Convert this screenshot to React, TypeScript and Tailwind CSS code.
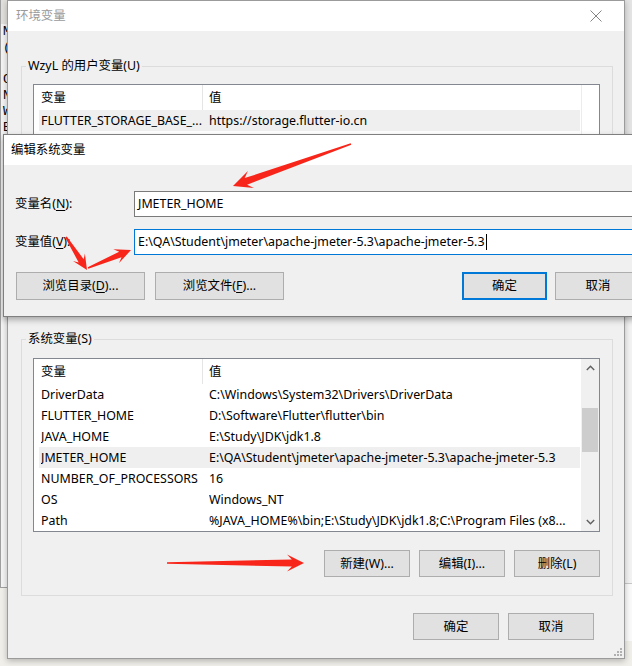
import React from "react";

type ArrowSpec = { x1: number; y1: number; x2: number; y2: number; hl: number; hw: number; tw: number; nw: number };

function arrowPoints(a: ArrowSpec): string {
  const dx = a.x2 - a.x1;
  const dy = a.y2 - a.y1;
  const L = Math.sqrt(dx * dx + dy * dy);
  const ux = dx / L;
  const uy = dy / L;
  const nx = -uy;
  const ny = ux;
  const neckX = a.x2 - ux * a.hl * 0.72;
  const neckY = a.y2 - uy * a.hl * 0.72;
  const baseX = a.x2 - ux * a.hl;
  const baseY = a.y2 - uy * a.hl;
  const pts: [number, number][] = [
    [a.x1 + nx * a.tw, a.y1 + ny * a.tw],
    [neckX + nx * a.nw, neckY + ny * a.nw],
    [baseX + nx * a.hw, baseY + ny * a.hw],
    [a.x2, a.y2],
    [baseX - nx * a.hw, baseY - ny * a.hw],
    [neckX - nx * a.nw, neckY - ny * a.nw],
    [a.x1 - nx * a.tw, a.y1 - ny * a.tw],
  ];
  return pts.map((p) => `${p[0].toFixed(1)},${p[1].toFixed(1)}`).join(" ");
}

const arrows: ArrowSpec[] = [
  { x1: 351, y1: 144, x2: 233, y2: 186, hl: 19, hw: 9, tw: 0.9, nw: 3.5 },
  { x1: 66, y1: 237, x2: 87, y2: 270, hl: 15, hw: 7, tw: 0.9, nw: 3 },
  { x1: 88, y1: 268, x2: 131, y2: 250, hl: 16, hw: 7.5, tw: 0.9, nw: 3 },
  { x1: 167, y1: 563, x2: 304, y2: 563, hl: 17, hw: 8.5, tw: 0.8, nw: 3.5 },
];

const sysRows: [string, string][] = [
  ["DriverData", "C:\\Windows\\System32\\Drivers\\DriverData"],
  ["FLUTTER_HOME", "D:\\Software\\Flutter\\flutter\\bin"],
  ["JAVA_HOME", "E:\\Study\\JDK\\jdk1.8"],
  ["JMETER_HOME", "E:\\QA\\Student\\jmeter\\apache-jmeter-5.3\\apache-jmeter-5.3"],
  ["NUMBER_OF_PROCESSORS", "16"],
  ["OS", "Windows_NT"],
  ["Path", "%JAVA_HOME%\\bin;E:\\Study\\JDK\\jdk1.8;C:\\Program Files (x8..."],
];

function ListHeader() {
  return (
    <div className="flex h-[25px] shrink-0 items-center bg-white">
      <div className="flex h-full w-[169px] items-center border-r border-[#e5e5e5] pl-[7px]">变量</div>
      <div className="pl-[6px]">值</div>
    </div>
  );
}

function Row({ name, value, selected }: { name: string; value: string; selected?: boolean }) {
  return (
    <div className={selected ? "ml-[5px] mr-[1px] flex h-[21px] items-center bg-[#efefef] pl-[2px]" : "ml-[5px] mr-[1px] flex h-[21px] items-center pl-[2px]"}>
      <div className="w-[168px] shrink-0 overflow-hidden whitespace-nowrap">{name}</div>
      <div className="overflow-hidden whitespace-nowrap">{value}</div>
    </div>
  );
}

function Chevron({ up }: { up?: boolean }) {
  return (
    <svg width="9" height="6" viewBox="0 0 9 6">
      <polyline
        points={up ? "0.8,5 4.5,1.2 8.2,5" : "0.8,1 4.5,4.8 8.2,1"}
        fill="none"
        stroke="#606060"
        strokeWidth="1.4"
      />
    </svg>
  );
}

export default function App() {
  return (
    <div className="relative h-[666px] w-[632px] overflow-hidden bg-[#f1efea] font-['Noto_Sans','Noto_Sans_CJK_SC',sans-serif] text-[12.4px] leading-[16px] text-black">
      {/* background console window on the left */}
      <div className="absolute left-0 top-0 flex h-[588px] w-[8px] flex-col border-b border-l border-[#a0a0a0] bg-[#f4f4f4]">
        <div className="h-[24px] shrink-0 bg-[#e2e0dc]" />
        <div className="pl-[2px] font-['Liberation_Mono',monospace] text-[13px] leading-[16px]">
          <div>M</div>
          <div>(</div>
          <div>&nbsp;</div>
          <div>C</div>
          <div>N</div>
          <div>W</div>
          <div>E</div>
        </div>
      </div>

      {/* background on the right */}
      <div className="absolute right-0 top-0 flex h-full w-[8px] flex-col">
        <div className="h-[316px] shrink-0 bg-[#e4e4e4]" />
        <div className="h-[267px] shrink-0 bg-[#f3f3f3]" />
        <div className="h-[58px] shrink-0 border-t border-[#c8c8c8] bg-[#fafafa]" />
        <div className="flex-1 bg-[#f1efea]" />
      </div>

      {/* 环境变量 dialog */}
      <div className="absolute left-[7px] top-0 flex h-[659px] w-[618px] flex-col border border-[#9b9b9b] bg-[#f0f0f0] shadow-[0_2px_6px_rgba(0,0,0,0.25)]">
        <div className="flex h-[30px] shrink-0 items-center justify-between bg-white pl-[8px] pr-[22px]">
          <span className="text-[#9a9a9a]">环境变量</span>
          <svg width="12" height="12" viewBox="0 0 12 12">
            <line x1="0.5" y1="0.5" x2="11.5" y2="11.5" stroke="#858585" strokeWidth="1" />
            <line x1="11.5" y1="0.5" x2="0.5" y2="11.5" stroke="#858585" strokeWidth="1" />
          </svg>
        </div>

        <div className="flex flex-1 flex-col pl-[13px] pr-[11px]">
          {/* user variables */}
          <fieldset className="mt-[27px] h-[256px] border border-[#dcdcdc] p-0">
            <legend className="ml-[4px] px-[2px] leading-[16px]">WzyL 的用户变量(U)</legend>
            <div className="pl-[11px] pr-[12px] pt-[10px]">
              <div className="flex h-[170px] border border-[#828790] bg-white">
                <div className="flex flex-1 flex-col">
                  <ListHeader />
                  <Row name="FLUTTER_STORAGE_BASE_..." value="https://storage.flutter-io.cn" selected />
                </div>
                <div className="w-[18px] border-l border-[#ececec] bg-white" />
              </div>
            </div>
          </fieldset>

          {/* system variables */}
          <fieldset className="mt-[17px] border border-[#dcdcdc] p-0">
            <legend className="ml-[4px] px-[2px] leading-[16px]">系统变量(S)</legend>
            <div className="pb-[18px] pl-[11px] pr-[12px] pt-[11px]">
              <div className="flex h-[174px] border border-[#828790] bg-white">
                <div className="flex flex-1 flex-col">
                  <ListHeader />
                  {sysRows.map(([n, v]) => (
                    <Row key={n} name={n} value={v} selected={n === "JMETER_HOME"} />
                  ))}
                </div>
                <div className="flex w-[18px] flex-col bg-[#f0f0f0]">
                  <div className="flex h-[18px] shrink-0 items-center justify-center">
                    <Chevron up />
                  </div>
                  <div className="flex flex-1 flex-col px-[1px] pt-[31px]">
                    <div className="h-[44px] bg-[#cdcdcd]" />
                  </div>
                  <div className="flex h-[18px] shrink-0 items-center justify-center">
                    <Chevron />
                  </div>
                </div>
              </div>
              <div className="mt-[18px] flex justify-end gap-[9px]">
                <button className="flex h-[27px] w-[86px] items-center justify-center border border-[#adadad] bg-[#e1e1e1]">新建(W)...</button>
                <button className="flex h-[27px] w-[86px] items-center justify-center border border-[#adadad] bg-[#e1e1e1]">编辑(I)...</button>
                <button className="flex h-[27px] w-[86px] items-center justify-center border border-[#adadad] bg-[#e1e1e1]">删除(L)</button>
              </div>
            </div>
          </fieldset>

          <div className="mt-[17px] flex justify-end gap-[9px] pr-[19px]">
            <button className="flex h-[27px] w-[86px] items-center justify-center border border-[#adadad] bg-[#e1e1e1]">确定</button>
            <button className="flex h-[27px] w-[86px] items-center justify-center border border-[#adadad] bg-[#e1e1e1]">取消</button>
          </div>
        </div>

        <svg className="absolute bottom-[2px] right-[2px]" width="8" height="8" viewBox="0 0 8 8">
          <rect x="6" y="0" width="2" height="2" fill="#b0b0b0" />
          <rect x="3" y="3" width="2" height="2" fill="#b0b0b0" />
          <rect x="6" y="3" width="2" height="2" fill="#b0b0b0" />
          <rect x="0" y="6" width="2" height="2" fill="#b0b0b0" />
          <rect x="3" y="6" width="2" height="2" fill="#b0b0b0" />
          <rect x="6" y="6" width="2" height="2" fill="#b0b0b0" />
        </svg>
      </div>

      {/* 编辑系统变量 dialog */}
      <div className="absolute left-[3px] top-[134px] flex h-[183px] w-[652px] flex-col border border-[#7f7f7f] bg-[#f0f0f0] shadow-[0_3px_6px_rgba(0,0,0,0.3)]">
        <div className="flex h-[30px] shrink-0 items-center bg-white pl-[7px]">编辑系统变量</div>
        <div className="flex flex-col pl-[11px] pr-[13px] pt-[26px]">
          <div className="flex h-[26px] items-center">
            <div className="w-[119px] shrink-0">
              变量名(<span className="underline underline-offset-2">N</span>):
            </div>
            <div className="flex h-full flex-1 items-center border border-[#7a7a7a] bg-white pl-[3px]">JMETER_HOME</div>
          </div>
          <div className="mt-[12px] flex h-[26px] items-center">
            <div className="w-[119px] shrink-0">
              变量值(<span className="underline underline-offset-2">V</span>):
            </div>
            <div className="flex h-full flex-1 items-center border border-[#0078d7] bg-white pl-[3px]">
              <span>E:\QA\Student\jmeter\apache-jmeter-5.3\apache-jmeter-5.3</span>
              <span className="ml-[1px] h-[16px] w-[1px] bg-black" />
            </div>
          </div>
          <div className="mt-[17px] flex items-center">
            <button className="ml-[1px] flex h-[28px] w-[129px] items-center justify-center border border-[#adadad] bg-[#e1e1e1]">
              浏览目录(<span className="underline underline-offset-2">D</span>)...
            </button>
            <button className="ml-[10px] flex h-[28px] w-[129px] items-center justify-center border border-[#adadad] bg-[#e1e1e1]">
              浏览文件(<span className="underline underline-offset-2">F</span>)...
            </button>
            <div className="flex-1" />
            <button className="flex h-[28px] w-[85px] items-center justify-center border-2 border-[#0078d7] bg-[#e1e1e1]">确定</button>
            <button className="ml-[8px] flex h-[28px] w-[86px] items-center justify-center border border-[#adadad] bg-[#e1e1e1]">取消</button>
          </div>
        </div>
      </div>

      {/* red annotation arrows */}
      <svg className="pointer-events-none absolute left-0 top-0" width="632" height="666" viewBox="0 0 632 666">
        {arrows.map((a, i) => (
          <polygon key={i} points={arrowPoints(a)} fill="#f8261a" />
        ))}
      </svg>
    </div>
  );
}
